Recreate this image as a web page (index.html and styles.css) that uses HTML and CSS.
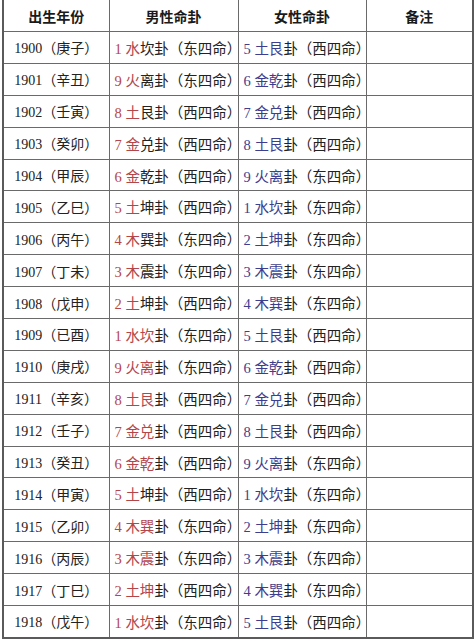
FILE: index.html
```html
<!DOCTYPE html>
<html lang="zh-CN">
<head>
<meta charset="utf-8">
<title>命卦表</title>
<link rel="stylesheet" href="styles.css">
</head>
<body>
<div class="wrap">
<table class="gua">
<colgroup>
<col class="c1"><col class="c2"><col class="c3"><col class="c4">
</colgroup>
<thead>
<tr><th>出生年份</th><th>男性命卦</th><th>女性命卦</th><th>备注</th></tr>
</thead>
<tbody>
<tr><td class="yr">1900（庚子）</td><td><span class="m">1 水</span>坎卦（东四命）</td><td><span class="f">5 土艮</span>卦（西四命）</td><td></td></tr>
<tr><td class="yr">1901（辛丑）</td><td><span class="m">9 火</span>离卦（东四命）</td><td><span class="f">6 金乾</span>卦（西四命）</td><td></td></tr>
<tr><td class="yr">1902（壬寅）</td><td><span class="m">8 土</span>艮卦（西四命）</td><td><span class="f">7 金兑</span>卦（西四命）</td><td></td></tr>
<tr><td class="yr">1903（癸卯）</td><td><span class="m">7 金</span>兑卦（西四命）</td><td><span class="f">8 土艮</span>卦（西四命）</td><td></td></tr>
<tr><td class="yr">1904（甲辰）</td><td><span class="m">6 金</span>乾卦（西四命）</td><td><span class="f">9 火离</span>卦（东四命）</td><td></td></tr>
<tr><td class="yr">1905（乙巳）</td><td><span class="m">5 土</span>坤卦（西四命）</td><td><span class="f">1 水坎</span>卦（东四命）</td><td></td></tr>
<tr><td class="yr">1906（丙午）</td><td><span class="m">4 木</span>巽卦（东四命）</td><td><span class="f">2 土坤</span>卦（东四命）</td><td></td></tr>
<tr><td class="yr">1907（丁未）</td><td><span class="m">3 木</span>震卦（东四命）</td><td><span class="f">3 木震</span>卦（东四命）</td><td></td></tr>
<tr><td class="yr">1908（戊申）</td><td><span class="m">2 土</span>坤卦（西四命）</td><td><span class="f">4 木巽</span>卦（东四命）</td><td></td></tr>
<tr><td class="yr">1909（已酉）</td><td><span class="m">1 水坎</span>卦（东四命）</td><td><span class="f">5 土艮</span>卦（西四命）</td><td></td></tr>
<tr><td class="yr">1910（庚戌）</td><td><span class="m">9 火离</span>卦（东四命）</td><td><span class="f">6 金乾</span>卦（西四命）</td><td></td></tr>
<tr><td class="yr">1911（辛亥）</td><td><span class="m">8 土艮</span>卦（西四命）</td><td><span class="f">7 金兑</span>卦（西四命）</td><td></td></tr>
<tr><td class="yr">1912（壬子）</td><td><span class="m">7 金兑</span>卦（西四命）</td><td><span class="f">8 土艮</span>卦（西四命）</td><td></td></tr>
<tr><td class="yr">1913（癸丑）</td><td><span class="m">6 金乾</span>卦（西四命）</td><td><span class="f">9 火离</span>卦（东四命）</td><td></td></tr>
<tr><td class="yr">1914（甲寅）</td><td><span class="m">5 土</span>坤卦（西四命）</td><td><span class="f">1 水坎</span>卦（东四命）</td><td></td></tr>
<tr><td class="yr">1915（乙卯）</td><td><span class="m">4 木巽</span>卦（东四命）</td><td><span class="f">2 土坤</span>卦（东四命）</td><td></td></tr>
<tr><td class="yr">1916（丙辰）</td><td><span class="m">3 木震</span>卦（东四命）</td><td><span class="f">3 木震</span>卦（东四命）</td><td></td></tr>
<tr><td class="yr">1917（丁巳）</td><td><span class="m">2 土坤</span>卦（西四命）</td><td><span class="f">4 木巽</span>卦（东四命）</td><td></td></tr>
<tr><td class="yr">1918（戊午）</td><td><span class="m">1 水坎</span>卦（东四命）</td><td><span class="f">5 土艮</span>卦（西四命）</td><td></td></tr>
</tbody>
</table>
</div>
</body>
</html>
```
FILE: styles.css
```css
html, body {
  margin: 0;
  padding: 0;
  background: #ffffff;
}
.wrap {
  padding: 0 2px 0 2px;
}
.gua {
  width: 470px;
  border-collapse: collapse;
  table-layout: fixed;
  border-left: 2px solid #5a5a5a;
  border-right: 2px solid #5a5a5a;
  border-bottom: 2px solid #5a5a5a;
  font-family: "Liberation Serif", "Noto Sans CJK SC", serif;
  font-size: 14.5px;
  color: #222222;
}
.c1 { width: 106px; }
.c2 { width: 129px; }
.c3 { width: 128px; }
.c4 { width: 107px; }
.gua th {
  height: 31px;
  padding: 0;
  font-family: "Noto Sans CJK SC", sans-serif;
  font-weight: 700;
  font-size: 14px;
  color: #1a1a1a;
  text-align: center;
  border-left: 1px solid #6a6a6a;
  border-right: 1px solid #6a6a6a;
  border-bottom: 1px solid #6a6a6a;
}
.gua td {
  height: 30.9px;
  padding: 0 0 0 5px;
  white-space: nowrap;
  border: 1px solid #6a6a6a;
  text-align: left;
}
.gua td.yr {
  text-align: center;
  padding: 0;
  font-size: 14px;
}
.m { color: #b4464a; }
.f { color: #3e3e8e; }
```
